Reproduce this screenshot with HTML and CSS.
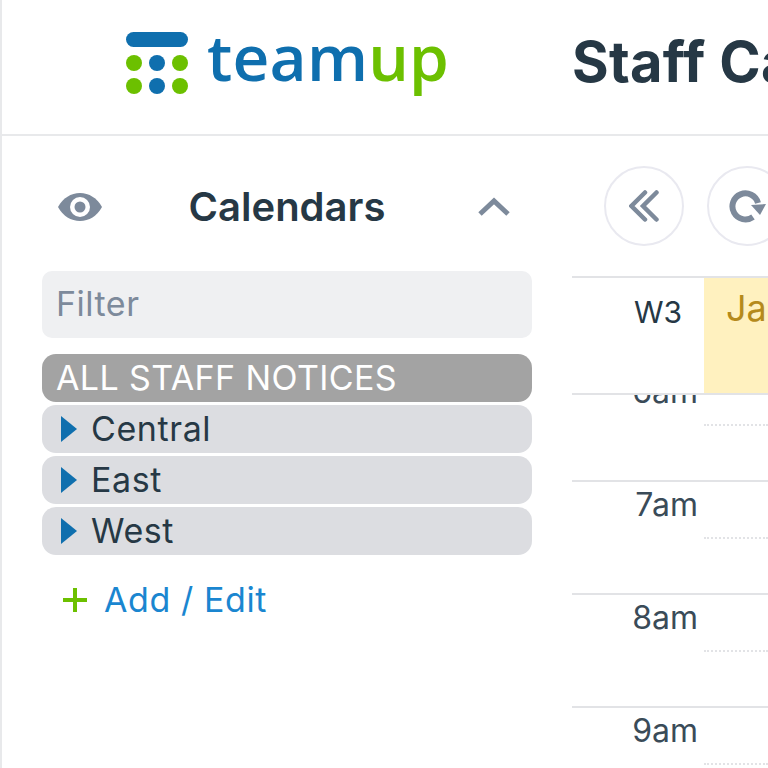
FILE: index.html
```html
<!DOCTYPE html>
<html lang="en">
<head>
    <meta charset="UTF-8">
    <title>Staff Calendar</title>
    <link rel="stylesheet" href="styles.css">
</head>
<body>
<div id="page">
    <header id="header">
        <div class="logo">
            <svg class="logo-mark" width="62" height="62" viewBox="0 0 62 62">
                <rect x="0" y="0" width="62" height="15" rx="7.5" fill="#0f6fae"/>
                <circle cx="8" cy="31" r="8" fill="#6cc000"/>
                <circle cx="31" cy="31" r="8" fill="#0f6fae"/>
                <circle cx="54" cy="31" r="8" fill="#6cc000"/>
                <circle cx="8" cy="54" r="8" fill="#6cc000"/>
                <circle cx="31" cy="54" r="8" fill="#0f6fae"/>
                <circle cx="54" cy="54" r="8" fill="#6cc000"/>
            </svg>
            <span class="logo-text">team<span class="logo-up">up</span></span>
        </div>
        <h1 class="title">Staff Calendar</h1>
    </header>
    <div id="content">
        <aside id="sidebar">
            <div class="cal-head">
                <svg class="eye" width="44" height="28" viewBox="0 0 44 28">
                    <path d="M0 14C5 5 13 0 22 0s17 5 22 14c-5 9-13 14-22 14S5 23 0 14z" fill="#7d8a9b"/>
                    <circle cx="22" cy="14" r="10" fill="#fff"/>
                    <circle cx="22" cy="14" r="5.5" fill="#7d8a9b"/>
                </svg>
                <h2 class="cal-title">Calendars</h2>
                <svg class="chevron" width="34" height="20" viewBox="0 0 34 20">
                    <path d="M3 17L17 4l14 13" fill="none" stroke="#7d8a9b" stroke-width="5"/>
                </svg>
            </div>
            <div class="filter">Filter</div>
            <ul class="cal-list">
                <li class="cal-row cal-all">ALL STAFF NOTICES</li>
                <li class="cal-row"><span class="arrow"></span>Central</li>
                <li class="cal-row"><span class="arrow"></span>East</li>
                <li class="cal-row"><span class="arrow"></span>West</li>
            </ul>
            <a class="add-edit" href="#">
                <svg width="26" height="26" viewBox="0 0 26 26">
                    <path d="M13 1v24M1 13h24" stroke="#6cc000" stroke-width="4"/>
                </svg>
                Add / Edit
            </a>
        </aside>
        <main id="main">
            <div class="toolbar">
                <div class="round-btn">
                    <svg width="30" height="32" viewBox="0 0 30 32">
                        <path d="M16 2.500L2.500 16 16 29.500M27.500 2.500L14 16l13.500 13.500" fill="none" stroke="#7d8a9b" stroke-width="4.500" stroke-linecap="round"/>
                    </svg>
                </div>
                <div class="round-btn">
                    <svg width="38" height="36" viewBox="0 0 38 36">
                        <path d="M30 15A13 13 0 1 0 25 29" fill="none" stroke="#7d8a9b" stroke-width="6"/>
                        <path d="M23 17l15-1-6 11z" fill="#7d8a9b"/>
                    </svg>
                </div>
            </div>
            <div class="grid-head">
                <div class="week">W3</div>
                <div class="day-head">Jan 17</div>
            </div>
            <div class="grid-scroll">
                <div class="hours">
                    <div class="hour"><span class="hour-label">6am</span><span class="half"></span></div>
                    <div class="hour"><span class="hour-label">7am</span><span class="half"></span></div>
                    <div class="hour"><span class="hour-label">8am</span><span class="half"></span></div>
                    <div class="hour"><span class="hour-label">9am</span><span class="half"></span></div>
                </div>
            </div>
        </main>
    </div>
</div>
</body>
</html>
```
FILE: styles.css
```css
* {
    margin: 0;
    padding: 0;
    box-sizing: border-box;
}
html, body {
    height: 100%;
    overflow: hidden;
}
body {
    background: #fff;
    font-family: Inter, "Liberation Sans", sans-serif;
    color: #263845;
}
#page {
    width: 768px;
    height: 768px;
    overflow: hidden;
    border-left: 2px solid #e8e9eb;
}

/* header */
#header {
    height: 136px;
    display: flex;
    border-bottom: 2px solid #e8e9eb;
    white-space: nowrap;
}
.logo {
    width: 570px;
    flex-shrink: 0;
    display: flex;
    align-items: flex-start;
    padding: 32px 0 0 124px;
}
.logo-mark {
    flex-shrink: 0;
}
.logo-text {
    margin: -17px 0 0 19px;
    font-family: "Open Sans", sans-serif;
    font-size: 64px;
    font-weight: 600;
    line-height: 84px;
    letter-spacing: 0.2px;
    color: #0f6fae;
}
.logo-up {
    color: #6cc000;
}
.title {
    font-size: 56px;
    font-weight: 700;
    line-height: 60px;
    letter-spacing: 0.3px;
    padding-top: 32px;
}

#content {
    display: flex;
}

/* sidebar */
#sidebar {
    width: 570px;
    flex-shrink: 0;
    padding: 0 40px;
}
.cal-head {
    height: 135px;
    display: flex;
    align-items: center;
    justify-content: space-between;
    padding: 6px 21px 0 16px;
}
.cal-title {
    margin-right: 5px;
    font-size: 40px;
    font-weight: 600;
}
.filter {
    height: 67px;
    line-height: 65px;
    padding-left: 14px;
    background: #eff0f2;
    border-radius: 10px;
    font-size: 34px;
    letter-spacing: 0.5px;
    color: #7d8a9b;
}
.cal-list {
    list-style: none;
    margin-top: 16px;
    display: flex;
    flex-direction: column;
    gap: 3px;
}
.cal-row {
    height: 48px;
    line-height: 50px;
    padding-left: 19px;
    display: flex;
    align-items: center;
    background: #dcdde1;
    border-radius: 14px;
    font-size: 34px;
    letter-spacing: 0.6px;
}
.cal-all {
    padding-left: 14px;
    background: #a3a3a3;
    color: #fff;
    letter-spacing: 0.4px;
}
.arrow {
    width: 0;
    height: 0;
    margin-right: 14px;
    border-left: 16px solid #0f6fae;
    border-top: 13px solid transparent;
    border-bottom: 13px solid transparent;
}
.add-edit {
    margin: 26px 0 0 20px;
    display: flex;
    align-items: center;
    gap: 16px;
    font-size: 34px;
    letter-spacing: 0.6px;
    line-height: 38px;
    color: #1a86d0;
    text-decoration: none;
}

/* calendar */
#main {
    flex-grow: 1;
    min-width: 0;
}
.toolbar {
    height: 140px;
    padding: 30px 0 0 32px;
    display: flex;
    gap: 23px;
}
.round-btn {
    width: 80px;
    height: 80px;
    flex-shrink: 0;
    display: flex;
    align-items: center;
    justify-content: center;
    border: 2px solid #e9e9f0;
    border-radius: 50%;
}
.grid-head {
    height: 119px;
    display: flex;
    border-top: 2px solid #e2e3e6;
    border-bottom: 2px solid #e2e3e6;
}
.week {
    width: 132px;
    flex-shrink: 0;
    padding: 16px 22px 0 0;
    text-align: right;
    font-size: 30px;
    line-height: 36px;
}
.day-head {
    flex-grow: 1;
    min-width: 0;
    padding: 8px 0 0 22px;
    background: #fff1bf;
    color: #b58a1b;
    font-size: 36px;
    line-height: 44px;
    white-space: nowrap;
    overflow: hidden;
}
.grid-scroll {
    height: 373px;
    overflow: hidden;
}
.hours {
    margin-top: -26px;
}
.hour {
    height: 113px;
    position: relative;
    border-bottom: 2px solid #e2e3e6;
}
.hour-label {
    display: block;
    width: 126px;
    padding-top: 5px;
    text-align: right;
    font-size: 32px;
    line-height: 36px;
    color: #3a4b58;
}
.half {
    position: absolute;
    left: 132px;
    right: 0;
    top: 55px;
    border-top: 2px dotted #e2e3e6;
}
```
